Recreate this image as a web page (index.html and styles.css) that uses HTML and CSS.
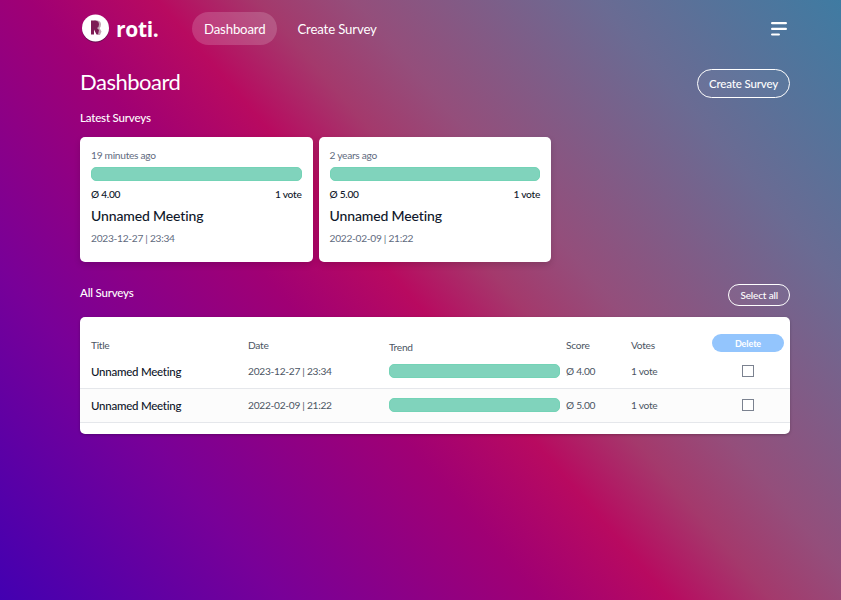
FILE: index.html
```
<!DOCTYPE html>
<html lang="en">
<head>
    <meta charset="UTF-8">
    <meta name="viewport" content="width=device-width, initial-scale=1.0">
    <title>roti. - Dashboard</title>
    <link rel="stylesheet" href="styles.css">
</head>
<body>
    <div class="container">
        <header class="navbar">
            <a class="logo" href="#">
                <svg class="logo-mark" width="30" height="30" viewBox="0 0 30 30">
                    <circle cx="15.500" cy="15" r="13.500" fill="#4a1040" opacity="0.7"/>
                    <circle cx="15.500" cy="14" r="13.500" fill="#fff"/>
                    <path d="M14 6.500h3.500q3.500 0.500 3.500 4 0 2.500-1.500 3.500l2 3.500-1.500 3.500h-2z" fill="#c4a5b5"/>
                    <path d="M11 6.500h4.500q3.500 0.500 3.500 4 0 2.500-2 3.500l2 2-1 4.500h-1.500l-2.500-5v5h-3z" fill="#7d1c55"/>
                </svg>
                <span class="logo-text">roti.</span>
            </a>
            <nav class="nav">
                <a class="nav-link active" href="#">Dashboard</a>
                <a class="nav-link" href="#">Create Survey</a>
            </nav>
            <button class="menu-btn" aria-label="Menu">
                <svg width="16" height="14" viewBox="0 0 16 14">
                    <path d="M1.100 1.200h13.800M1.100 6.900h13.800M1.100 12.500h6.800" stroke="#fff" stroke-width="2.200" stroke-linecap="round"/>
                </svg>
            </button>
        </header>

        <div class="page-head">
            <h1>Dashboard</h1>
            <button class="btn">Create Survey</button>
        </div>

        <h2>Latest Surveys</h2>
        <div class="cards">
            <div class="card">
                <div class="muted">19 minutes ago</div>
                <div class="trend"></div>
                <div class="card-stats"><span>Ø 4.00</span><span>1 vote</span></div>
                <div class="card-title">Unnamed Meeting</div>
                <div class="muted">2023-12-27 | 23:34</div>
            </div>
            <div class="card">
                <div class="muted">2 years ago</div>
                <div class="trend"></div>
                <div class="card-stats"><span>Ø 5.00</span><span>1 vote</span></div>
                <div class="card-title">Unnamed Meeting</div>
                <div class="muted">2022-02-09 | 21:22</div>
            </div>
        </div>

        <div class="list-head">
            <h2>All Surveys</h2>
            <button class="btn btn-small">Select all</button>
        </div>
        <div class="table">
            <div class="row row-head">
                <span>Title</span>
                <span>Date</span>
                <span class="head-trend">Trend</span>
                <span>Score</span>
                <span>Votes</span>
                <button class="btn-delete">Delete</button>
            </div>
            <div class="row">
                <span class="row-title">Unnamed Meeting</span>
                <span>2023-12-27 | 23:34</span>
                <div class="trend"></div>
                <span>Ø 4.00</span>
                <span>1 vote</span>
                <input class="check" type="checkbox">
            </div>
            <div class="row row-even">
                <span class="row-title">Unnamed Meeting</span>
                <span>2022-02-09 | 21:22</span>
                <div class="trend"></div>
                <span>Ø 5.00</span>
                <span>1 vote</span>
                <input class="check" type="checkbox">
            </div>
        </div>
    </div>
</body>
</html>
```
FILE: styles.css
```
* {
    box-sizing: border-box;
}
body {
    margin: 0;
    min-height: 100vh;
    font-family: Lato, "Liberation Sans", sans-serif;
    font-size: 10.2px;
    letter-spacing: -0.28px;
    color: #0f172a;
    background: linear-gradient(49.5deg, #4300b1 0%, #780098 21%, #a00074 40%, #b80a60 49.5%, #a4396c 57%, #944e7b 64%, #6a6b93 82%, #3f7ba2 100%);
}
.container {
    width: 710px;
    margin-left: 80px;
}
h1, h2 {
    margin: 0;
    color: #fff;
}
h1 {
    font-size: 22px;
    font-weight: 400;
    line-height: 28px;
    letter-spacing: -0.5px;
}
h2 {
    font-size: 11.5px;
    font-weight: 500;
    line-height: 16px;
    letter-spacing: -0.18px;
}
button {
    font-family: inherit;
    letter-spacing: inherit;
    cursor: pointer;
}

/* Navbar */
.navbar {
    display: flex;
    align-items: center;
    height: 57px;
}
.logo {
    display: flex;
    align-items: center;
    width: 112px;
    gap: 6px;
    color: #fff;
    text-decoration: none;
}
.logo-mark {
    flex: none;
}
.logo-text {
    font-family: "Open Sans", sans-serif;
    font-size: 21px;
    font-weight: 700;
    letter-spacing: -0.3px;
}
.nav {
    display: flex;
    gap: 8px;
}
.nav-link {
    height: 33px;
    padding: 0 12px;
    border-radius: 17px;
    font-size: 13.2px;
    line-height: 34px;
    letter-spacing: -0.15px;
    color: #fff;
    text-decoration: none;
}
.nav-link.active {
    background: rgba(255, 255, 255, 0.17);
}
.menu-btn {
    display: flex;
    margin-left: auto;
    margin-right: 3px;
    padding: 0;
    border: none;
    background: none;
}

/* Headings */
.page-head {
    display: flex;
    justify-content: space-between;
    height: 53px;
    padding-top: 12px;
}
.page-head h1 {
    margin-top: -1px;
}
.btn {
    height: 29px;
    padding: 0 11px;
    border: 1px solid #fff;
    border-radius: 15px;
    font-size: 11.5px;
    font-weight: 500;
    letter-spacing: -0.15px;
    color: #fff;
    background: rgba(255, 255, 255, 0.04);
}
.btn-small {
    height: 22px;
    font-size: 10px;
}

/* Cards */
.cards {
    display: flex;
    gap: 6px;
    margin-top: 11px;
}
.card {
    width: 232.500px;
    height: 125px;
    padding: 11px 11px 12px;
    border-radius: 5px;
    background: #fff;
    box-shadow: 0 3px 6px rgba(0, 0, 0, 0.15);
}
.muted {
    line-height: 14px;
    color: #5f6b80;
}
.trend {
    height: 14px;
    border: 1px solid #74d3b6;
    border-radius: 5px;
    background: #80d3bc;
}
.card .trend {
    margin: 5px 0 6px;
}
.card-stats {
    display: flex;
    justify-content: space-between;
    line-height: 14px;
    font-weight: 500;
}
.card-title {
    margin: 6px 0;
    font-size: 14px;
    line-height: 18px;
    font-weight: 500;
    letter-spacing: -0.13px;
}

/* Survey list */
.list-head {
    display: flex;
    justify-content: space-between;
    margin-top: 22px;
    height: 33px;
}
.list-head h2 {
    padding-top: 1px;
}
.table {
    height: 117px;
    padding-top: 17px;
    border-radius: 5px;
    background: #fff;
    box-shadow: 0 1px 3px rgba(0, 0, 0, 0.25);
}
.row {
    display: grid;
    grid-template-columns: 157px 141px 171px 71px 81px 72px;
    align-items: center;
    height: 34px;
    padding-left: 11px;
    padding-bottom: 1px;
    border-bottom: 1px solid #e5e7eb;
    color: #4b5563;
}
.row .trend + span {
    padding-left: 6px;
}
.row-head {
    grid-template-columns: 157px 141px 177px 65px 81px 72px;
    height: 21px;
    padding-bottom: 3px;
    border-bottom: none;
    line-height: 14px;
    align-items: end;
}
.head-trend {
    margin-bottom: -2px;
}
.row-even {
    background: #fcfcfc;
}
.row-title {
    font-size: 11.500px;
    font-weight: 500;
    letter-spacing: -0.25px;
    color: #0f172a;
}
.btn-delete {
    align-self: start;
    height: 18px;
    border: none;
    border-radius: 9px;
    font-size: 9px;
    font-weight: 700;
    letter-spacing: -0.1px;
    color: #fff;
    background: #93c5fd;
}
.check {
    appearance: none;
    justify-self: center;
    width: 12px;
    height: 12px;
    margin: 0;
    border: 1px solid #7b8290;
    background: #fff;
}
```
